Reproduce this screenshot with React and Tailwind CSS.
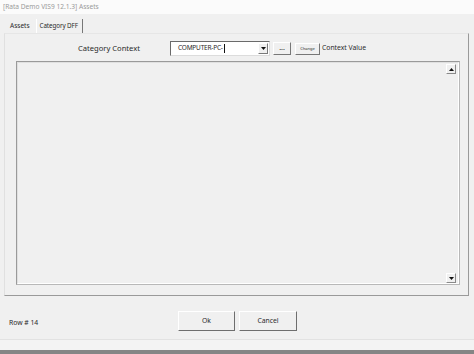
import React from "react";

const font = { fontFamily: '"Noto Sans", "Open Sans", sans-serif' };

function ScrollBtn({ up }) {
  return (
    <div className="w-[10px] h-[10px] bg-[#f0f0f0] border-t border-l border-t-white border-l-white border-r border-b border-r-[#8a8a8a] border-b-[#8a8a8a] flex items-center justify-center">
      <svg width="5" height="3" viewBox="0 0 5 3">
        {up ? <polygon points="0,3 5,3 2.5,0" fill="#111" /> : <polygon points="0,0 5,0 2.5,3" fill="#111" />}
      </svg>
    </div>
  );
}

export default function App() {
  return (
    <div className="w-[474px] h-[354px] bg-[#f0f0f0] flex flex-col overflow-hidden text-[#2a2a2a]" style={font}>
      <div className="h-[14px] bg-[#fbfbfb] flex items-center pl-[3px] text-[6.6px] text-[#9a9a9a] leading-none">
        [Rata Demo VIS9 12.1.3] Assets
      </div>
      <div className="h-[19px] flex items-end pl-[7px]">
        <div className="h-[13px] px-[3px] flex items-center text-[6.5px] leading-none">Assets</div>
        <div className="h-[14px] ml-[3px] pl-[3px] pr-[4px] flex items-center text-[6.3px] leading-none border-r border-r-[#777] border-l border-l-white tracking-[-0.1px]">
          Category DFF
        </div>
      </div>
      <div className="ml-[4px] w-[465px] h-[263px] border border-l-[#e0e0e0] border-t-[#e6e6e6] border-r-[#9a9a9a] border-b-[#9a9a9a] flex flex-col">
        <div className="h-[15px] mt-[7px] flex items-center">
          <div className="w-[135px] text-right text-[7.6px] leading-none">Category Context</div>
          <div className="ml-[30px] w-[100px] h-[15px] bg-white border-t border-l border-t-[#6a6a6a] border-l-[#6a6a6a] border-r border-b border-r-[#dcdcdc] border-b-[#dcdcdc] flex items-center">
            <div className="flex-1 pl-[7px] text-[6.5px] leading-none flex items-center tracking-[-0.2px]">
              COMPUTER-PC-<span className="inline-block w-px h-[9px] bg-[#111] ml-px" />
            </div>
            <div className="w-[10px] h-[11px] mr-[1px] bg-[#f0f0f0] border-t border-l border-t-white border-l-white border-r border-b border-r-[#7a7a7a] border-b-[#7a7a7a] flex items-center justify-center">
              <svg width="5" height="3" viewBox="0 0 5 3"><polygon points="0,0 5,0 2.5,3" fill="#111" /></svg>
            </div>
          </div>
          <div className="ml-[3px] w-[18px] h-[13px] bg-[#f0f0f0] border-t border-l border-t-white border-l-white border-r border-b border-r-[#777] border-b-[#777] flex items-center justify-center text-[7px] leading-none pb-[2px]">
            ...
          </div>
          <div className="ml-[4px] w-[25px] h-[12px] bg-[#f0f0f0] border-t border-l border-t-white border-l-white border-r border-b border-r-[#777] border-b-[#777] flex items-center justify-center text-[4px] leading-none">
            Change
          </div>
          <div className="ml-[2px] text-[6.8px] leading-none">Context Value</div>
        </div>
        <div className="mt-[5px] ml-[11px] w-[444px] h-[224px] bg-[#f0f0f0] border border-t-[#9a9a9a] border-l-[#9a9a9a] border-r-[#b8b8b8] border-b-[#b8b8b8]">
          <div className="w-full h-full border border-t-[#e0e0e0] border-l-[#e0e0e0] border-r-white border-b-white flex justify-end">
            <div className="w-[12px] flex flex-col justify-between items-start pt-[1px] pb-[0px]">
              <ScrollBtn up />
              <ScrollBtn />
            </div>
          </div>
        </div>
      </div>
      <div className="h-[43px] flex items-start">
        <div className="w-[178px] pl-[9px] pt-[24px] text-[6.8px] leading-none">Row # 14</div>
        <div className="mt-[15px] w-[57px] h-[20px] bg-[#f0f0f0] border-t border-l border-t-white border-l-white border-r border-b border-r-[#6e6e6e] border-b-[#6e6e6e] flex items-center justify-center text-[6.8px] leading-none">
          Ok
        </div>
        <div className="mt-[15px] ml-[4px] w-[58px] h-[20px] bg-[#f0f0f0] border-t border-l border-t-white border-l-white border-r border-b border-r-[#6e6e6e] border-b-[#6e6e6e] flex items-center justify-center text-[6.8px] leading-none">
          Cancel
        </div>
      </div>
      <div className="h-px bg-[#e2e2e2]" />
      <div className="h-[10px] bg-[#f3f3f3]" />
      <div className="flex-1 bg-[#858585]" />
    </div>
  );
}
